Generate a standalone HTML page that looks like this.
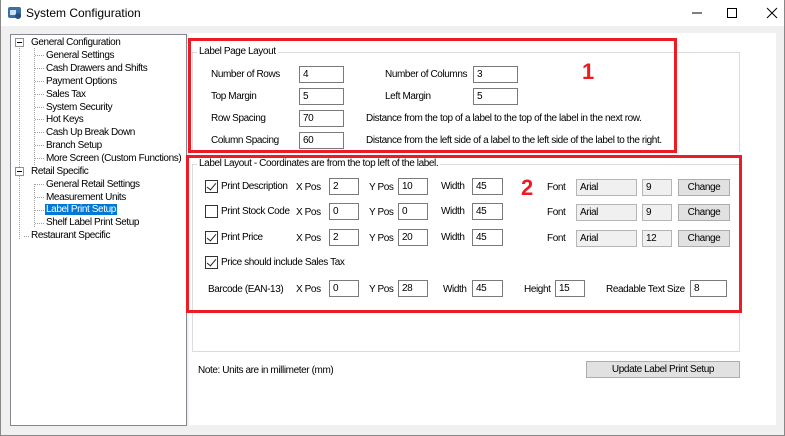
<!DOCTYPE html>
<html><head><meta charset="utf-8"><style>
*{box-sizing:border-box;margin:0;padding:0}
body{width:785px;height:436px;background:#f0f0f0;font-family:"Liberation Sans",sans-serif;font-size:10px;letter-spacing:-0.4px;color:#000;position:relative;overflow:hidden}
.a{position:absolute;white-space:nowrap}
.in{position:absolute;height:17px;border:1px solid #7a7a7a;background:#fff;padding:2px 3px;font-size:10px}
.ro{background:#f0f0f0;border-color:#b5b5b5}
.btn{position:absolute;border:1px solid #adadad;background:#e1e1e1;text-align:center;font-size:10px}
.cb{position:absolute;width:13px;height:13px;border:1px solid #333;background:#fff}
.cb.c::after{content:"";position:absolute;left:3px;top:0px;width:4px;height:8px;border:solid #222;border-width:0 1.5px 1.5px 0;transform:rotate(40deg)}
.red{position:absolute;border:3px solid #ed1c24}
</style></head><body>
<div class="a" style="left:0;top:0;width:785px;height:26px;background:#fff"></div>
<svg class="a" style="left:7px;top:6px" width="15" height="14"><rect x="1" y="1" width="13" height="11" rx="2" fill="#3a6ea5"/><rect x="3" y="4" width="6" height="5" fill="#cfe3f7"/><circle cx="11" cy="10" r="3" fill="#2a4f7a"/></svg>
<div class="a" style="left:26px;top:6px;font-size:12px;letter-spacing:0">System Configuration</div>
<svg class="a" style="left:690px;top:6px" width="90" height="14"><line x1="2" y1="7" x2="12" y2="7" stroke="#000"/><rect x="37.5" y="2.5" width="9" height="9" fill="none" stroke="#000"/><path d="M77 2L87 12M87 2L77 12" stroke="#000"/></svg>
<div class="a" style="left:0;top:0;width:785px;height:436px;border:1px solid #888;border-top:none"></div>

<div class="a" style="left:189px;top:33px;width:587px;height:392px;background:#fff"></div>
<div class="a" style="left:10px;top:34px;width:177px;height:392px;background:#fff;border:1px solid #828790"></div>
<svg class="a" style="left:10px;top:34px" width="177" height="392">
<g stroke="#a0a0a0" stroke-dasharray="1,1" fill="none">
<line x1="9.5" y1="14" x2="9.5" y2="206"/>
<line x1="24.5" y1="14" x2="24.5" y2="131"/>
<line x1="24.5" y1="150" x2="24.5" y2="194"/>
<line x1="14" y1="202.5" x2="20" y2="202.5"/>
</g>
<g stroke="#a0a0a0" stroke-dasharray="1,1">
<line x1="25" y1="21.5" x2="34" y2="21.5"/><line x1="25" y1="34.5" x2="34" y2="34.5"/><line x1="25" y1="47.5" x2="34" y2="47.5"/><line x1="25" y1="60.5" x2="34" y2="60.5"/><line x1="25" y1="73.5" x2="34" y2="73.5"/><line x1="25" y1="85.5" x2="34" y2="85.5"/><line x1="25" y1="98.5" x2="34" y2="98.5"/><line x1="25" y1="111.5" x2="34" y2="111.5"/><line x1="25" y1="124.5" x2="34" y2="124.5"/>
<line x1="25" y1="150.5" x2="34" y2="150.5"/><line x1="25" y1="163.5" x2="34" y2="163.5"/><line x1="25" y1="176.5" x2="34" y2="176.5"/><line x1="25" y1="189.5" x2="34" y2="189.5"/>
</g>
<rect x="5.5" y="4.5" width="8" height="8" fill="#fff" stroke="#919191"/><line x1="7" y1="8.5" x2="12" y2="8.5" stroke="#000"/>
<rect x="5.5" y="133.5" width="8" height="8" fill="#fff" stroke="#919191"/><line x1="7" y1="137.5" x2="12" y2="137.5" stroke="#000"/>
</svg>
<div class="a" style="left:31px;top:37px;line-height:12.87px">General Configuration</div>
<div class="a" style="left:46px;top:50px;line-height:12.87px">General Settings<br>Cash Drawers and Shifts<br>Payment Options<br>Sales Tax<br>System Security<br>Hot Keys<br>Cash Up Break Down<br>Branch Setup<br>More Screen (Custom Functions)</div>
<div class="a" style="left:31px;top:165.8px;line-height:12.87px">Retail Specific</div>
<div class="a" style="left:46px;top:178.7px;line-height:12.87px">General Retail Settings<br>Measurement Units<br><span style="background:#0078d7;color:#fff;padding:0 1px;margin-left:-1px">Label Print Setup</span><br>Shelf Label Print Setup</div>
<div class="a" style="left:31px;top:230px;line-height:12.87px">Restaurant Specific</div>

<div class="a" style="left:192px;top:52px;width:548px;height:100px;border:1px solid #dcdcdc;border-bottom:none"></div>
<div class="a" style="left:197px;top:46px;background:#fff;padding:0 2px">Label Page Layout</div>
<div class="a" style="left:211px;top:69px">Number of Rows</div><div class="in" style="left:299px;top:66px;width:45px">4</div>
<div class="a" style="left:385px;top:69px">Number of Columns</div><div class="in" style="left:473px;top:66px;width:45px">3</div>
<div class="a" style="left:211px;top:91px">Top Margin</div><div class="in" style="left:299px;top:88px;width:45px">5</div>
<div class="a" style="left:385px;top:91px">Left Margin</div><div class="in" style="left:473px;top:88px;width:45px">5</div>
<div class="a" style="left:211px;top:113px">Row Spacing</div><div class="in" style="left:299px;top:110px;width:45px">70</div>
<div class="a" style="left:366px;top:113px">Distance from the top of a label to the top of the label in the next row.</div>
<div class="a" style="left:211px;top:135px">Column Spacing</div><div class="in" style="left:299px;top:132px;width:45px">60</div>
<div class="a" style="left:366px;top:135px">Distance from the left side of a label to the left side of the label to the right.</div>
<div class="red" style="left:188px;top:38px;width:489px;height:115px"></div>
<div class="a" style="left:582px;top:59px;color:#ed1c24;font-weight:bold;font-size:22px;letter-spacing:0">1</div>

<div class="a" style="left:192px;top:164px;width:548px;height:188px;border:1px solid #dcdcdc"></div>
<div class="a" style="left:197px;top:158px;background:#fff;padding:0 2px">Label Layout - Coordinates are from the top left of the label.</div>

<div class="cb c" style="left:205px;top:180px"></div><div class="a" style="left:221px;top:181px">Print Description</div>
<div class="a" style="left:296px;top:182px">X Pos</div><div class="in" style="left:329px;top:178px;width:30px">2</div>
<div class="a" style="left:369px;top:182px">Y Pos</div><div class="in" style="left:398px;top:178px;width:30px">10</div>
<div class="a" style="left:441px;top:181px">Width</div><div class="in" style="left:472px;top:178px;width:31px">45</div>
<div class="a" style="left:547px;top:182px">Font</div><div class="in ro" style="left:576px;top:179px;width:61px">Arial</div><div class="in ro" style="left:642px;top:179px;width:30px">9</div><div class="btn" style="left:678px;top:179px;width:52px;height:17px;line-height:15px">Change</div>

<div class="cb" style="left:205px;top:205px"></div><div class="a" style="left:221px;top:206px">Print Stock Code</div>
<div class="a" style="left:296px;top:207px">X Pos</div><div class="in" style="left:329px;top:203px;width:30px">0</div>
<div class="a" style="left:369px;top:207px">Y Pos</div><div class="in" style="left:398px;top:203px;width:30px">0</div>
<div class="a" style="left:441px;top:206px">Width</div><div class="in" style="left:472px;top:203px;width:31px">45</div>
<div class="a" style="left:547px;top:207px">Font</div><div class="in ro" style="left:576px;top:204px;width:61px">Arial</div><div class="in ro" style="left:642px;top:204px;width:30px">9</div><div class="btn" style="left:678px;top:204px;width:52px;height:17px;line-height:15px">Change</div>

<div class="cb c" style="left:205px;top:231px"></div><div class="a" style="left:221px;top:232px">Print Price</div>
<div class="a" style="left:296px;top:233px">X Pos</div><div class="in" style="left:329px;top:229px;width:30px">2</div>
<div class="a" style="left:369px;top:233px">Y Pos</div><div class="in" style="left:398px;top:229px;width:30px">20</div>
<div class="a" style="left:441px;top:232px">Width</div><div class="in" style="left:472px;top:229px;width:31px">45</div>
<div class="a" style="left:547px;top:233px">Font</div><div class="in ro" style="left:576px;top:230px;width:61px">Arial</div><div class="in ro" style="left:642px;top:230px;width:30px">12</div><div class="btn" style="left:678px;top:230px;width:52px;height:17px;line-height:15px">Change</div>

<div class="cb c" style="left:205px;top:256px"></div><div class="a" style="left:221px;top:257px">Price should include Sales Tax</div>

<div class="a" style="left:208px;top:284px">Barcode (EAN-13)</div>
<div class="a" style="left:296px;top:284px">X Pos</div><div class="in" style="left:329px;top:280px;width:30px">0</div>
<div class="a" style="left:369px;top:284px">Y Pos</div><div class="in" style="left:398px;top:280px;width:30px">28</div>
<div class="a" style="left:443px;top:284px">Width</div><div class="in" style="left:472px;top:280px;width:31px">45</div>
<div class="a" style="left:524px;top:284px">Height</div><div class="in" style="left:555px;top:280px;width:30px">15</div>
<div class="a" style="left:606px;top:284px">Readable Text Size</div><div class="in" style="left:690px;top:280px;width:37px">8</div>

<div class="red" style="left:186px;top:155px;width:556px;height:158px"></div>
<div class="a" style="left:521px;top:175px;color:#ed1c24;font-weight:bold;font-size:22px;letter-spacing:0">2</div>

<div class="a" style="left:198px;top:365px">Note: Units are in millimeter (mm)</div>
<div class="btn" style="left:586px;top:361px;width:154px;height:17px;line-height:15px">Update Label Print Setup</div>
</body></html>
